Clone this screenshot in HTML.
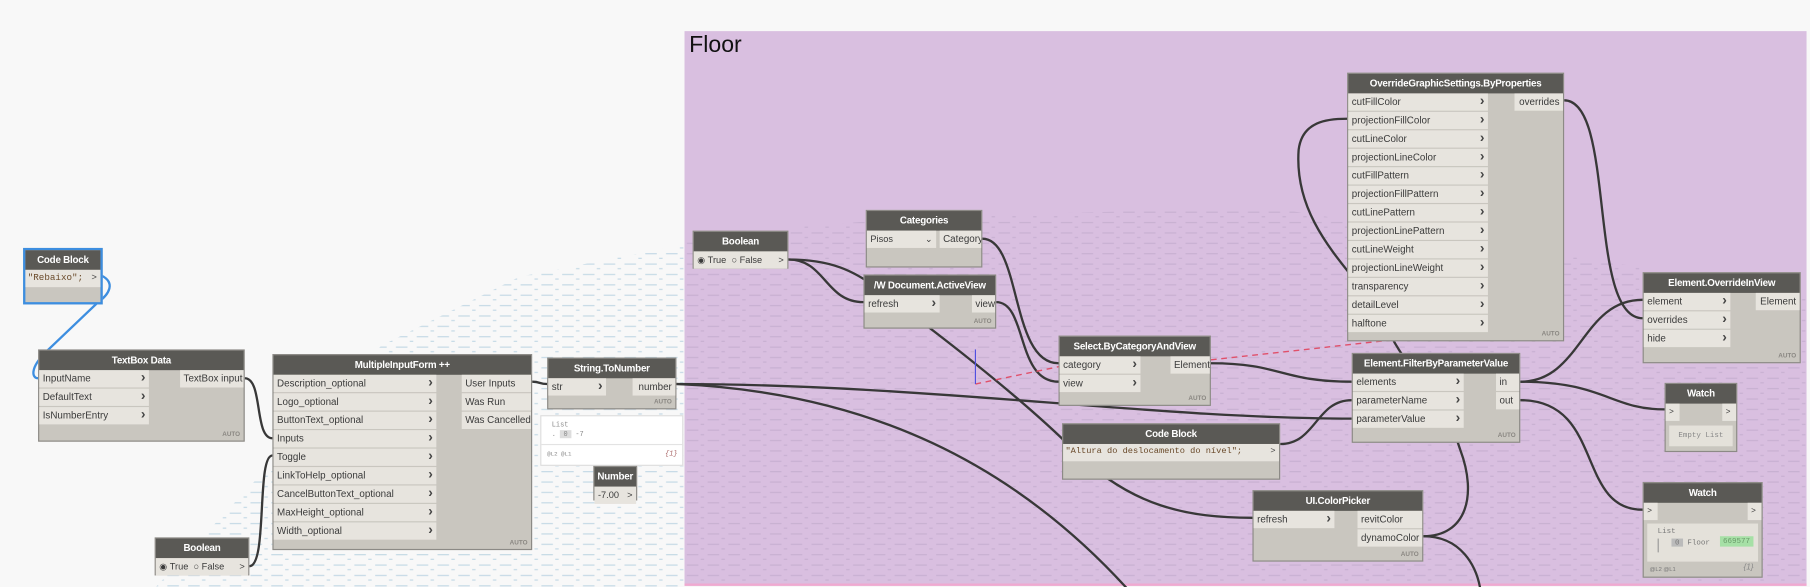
<!DOCTYPE html>
<html><head><meta charset="utf-8">
<style>
html,body{margin:0;padding:0;width:1810px;height:587px;overflow:hidden;background:#f8f8f8}
#w{position:absolute;left:0;top:0;width:1568px;height:509px;transform:scale(1.15434,1.1532);transform-origin:0 0;font-family:"Liberation Sans",sans-serif}
.grp{position:absolute;left:593px;top:27px;width:972px;height:479px;background:#d9bfe0;border-bottom:2px solid #f0a9d0}
.grp .t{position:absolute;left:4px;top:1px;font-size:20px;color:#111}
.n{position:absolute;background:#c9c6bf;border:1px solid #8c8a86;font-size:8.5px;color:#3a3a3a;box-sizing:border-box}
.h{background:#5a5955;color:#fff;font-weight:bold;text-align:center;height:17px;line-height:17px;font-size:8.5px;white-space:nowrap;overflow:hidden;letter-spacing:-0.2px}
.b{display:flex;justify-content:space-between}
.c{display:flex;flex-direction:column}
.r{height:15px;line-height:15px;background:#e7e4de;margin-bottom:1px;padding:0 3px;white-space:nowrap;position:relative;overflow:hidden}
.c.i .r::after{content:"›";position:absolute;right:3px;top:-1px;font-weight:bold;font-size:12px;color:#444}
.c.o .r{text-align:right}
.a{position:absolute;right:3px;bottom:2px;font-size:5.5px;font-weight:bold;color:#8a8782}
.m{font-family:"Liberation Mono",monospace;color:#6a4a2a}
svg{position:absolute;left:0;top:0}
</style></head><body><div id="w">
<div class="grp"><div class="t">Floor</div></div>
<svg width="1568" height="509">
<defs>
<pattern id="pb" width="18" height="9" patternUnits="userSpaceOnUse"><path d="M1 4h10M13 8h3" stroke="#a9c9dc" stroke-width="1"/></pattern>
<pattern id="pp" width="18" height="9" patternUnits="userSpaceOnUse"><path d="M1 4h10M13 8h3" stroke="#b7a2c4" stroke-width="1"/></pattern>
</defs>
<polygon points="135,509 330,300 450,240 593,212 593,509" fill="url(#pb)" opacity="0.7"/>
<polygon points="593,205 800,188 1100,180 1565,255 1565,505 593,505" fill="url(#pp)" opacity="0.55"/>
<g fill="none" stroke="#383838" stroke-width="2">
<path d="M683,225 C720,225 740,235 760,250 C800,280 880,340 930,390 C980,440 1030,449 1085,449"/>
<path d="M586,333 C750,340 880,400 985,520"/>
<path d="M1233,465 C1270,465 1280,430 1265,390 C1250,340 1215,320 1200,280 C1180,240 1120,200 1125,130 C1128,105 1150,103 1167,103"/>
<path d="M1233,465 C1265,465 1280,490 1283,515"/>
<path d="M212,328 C228,328 220,380 236,380"/>
<path d="M216,491 C232,491 222,395 236,395"/>
<path d="M461,331 C468,331 467,333 474,333"/>
<path d="M586,333 C800,333 1000,363 1171,363"/>
<path d="M683,225 C715,225 715,262 748,262"/>
<path d="M851,207 C885,207 875,315 917,315"/>
<path d="M863,262 C890,262 880,331 917,331"/>
<path d="M1049,315 C1110,315 1110,331 1171,331"/>
<path d="M1109,385 C1140,385 1140,347 1171,347"/>
<path d="M1317,331 C1370,331 1370,260 1423,260"/>
<path d="M1317,331 C1390,331 1395,355 1442,355"/>
<path d="M1317,347 C1390,347 1365,442 1423,442"/>
<path d="M1355,87 C1400,87 1375,276 1423,276"/>
</g>
<path d="M88,239 C100,245 95,255 85,262 L40,305 C25,320 28,328 33,328" fill="none" stroke="#3d8ee0" stroke-width="2"/>
<path d="M845,333 L917,318 M1049,312 L1250,290" stroke="#e0506a" stroke-width="1.2" stroke-dasharray="5,4" fill="none"/>
<path d="M845,303 V333" stroke="#5050e0" stroke-width="1"/>
</svg>

<div class="n" style="left:20px;top:215px;width:69px;height:49px;border:2px solid #3d8ee0">
<div class="h">Code Block</div>
<div class="r m" style="font-size:8px;padding-left:2px">"Rebaixo";<span style="position:absolute;right:3px;color:#444">&gt;</span></div></div>

<div class="n" style="left:33px;top:303px;width:179px;height:80px"><div class="h">TextBox Data</div>
<div class="b"><div class="c i" style="width:95px"><div class="r">InputName</div><div class="r">DefaultText</div><div class="r">IsNumberEntry</div></div>
<div class="c o" style="width:55px"><div class="r">TextBox input</div></div></div><div class="a">AUTO</div></div>

<div class="n" style="left:236px;top:307px;width:225px;height:170px"><div class="h">MultipleInputForm ++</div>
<div class="b"><div class="c i" style="width:141px"><div class="r">Description_optional</div><div class="r">Logo_optional</div><div class="r">ButtonText_optional</div><div class="r">Inputs</div><div class="r">Toggle</div><div class="r">LinkToHelp_optional</div><div class="r">CancelButtonText_optional</div><div class="r">MaxHeight_optional</div><div class="r">Width_optional</div></div>
<div class="c o" style="width:60px"><div class="r" style="text-align:left">User Inputs</div><div class="r" style="text-align:left">Was Run</div><div class="r" style="text-align:left">Was Cancelled</div></div></div><div class="a">AUTO</div></div>

<div class="n" style="left:474px;top:310px;width:112px;height:45px"><div class="h">String.ToNumber</div>
<div class="b"><div class="c i" style="width:50px"><div class="r">str</div></div><div class="c o" style="width:37px"><div class="r">number</div></div></div><div class="a">AUTO</div></div>

<div style="position:absolute;left:468px;top:360px;width:122px;height:42px;background:#fff;border:1px solid #ddd;font-family:'Liberation Mono',monospace;font-size:6px;color:#888">
<div style="position:absolute;left:9px;top:4px">List</div>
<div style="position:absolute;left:9px;top:12px">. <span style="background:#ddd;padding:0 3px">0</span> -7</div>
<div style="position:absolute;left:0;right:0;top:24px;border-top:1px solid #e3e3e3"></div>
<div style="position:absolute;left:5px;top:30px;font-size:5px">@L2 @L1</div>
<div style="position:absolute;right:4px;top:29px;font-style:italic;color:#a66">{1}</div></div>

<div class="n" style="left:514px;top:404px;width:38px;height:30px"><div class="h">Number</div>
<div class="r" style="font-size:8px">-7.00<span style="position:absolute;right:3px">&gt;</span></div></div>

<div class="n" style="left:134px;top:466px;width:82px;height:33px"><div class="h">Boolean</div>
<div class="r" style="font-size:8px">◉ True&nbsp; ○ False<span style="position:absolute;right:3px">&gt;</span></div></div>

<div class="n" style="left:600px;top:200px;width:83px;height:33px"><div class="h">Boolean</div>
<div class="r" style="font-size:8px">◉ True&nbsp; ○ False<span style="position:absolute;right:3px">&gt;</span></div></div>

<div class="n" style="left:750px;top:182px;width:101px;height:50px"><div class="h">Categories</div>
<div class="b"><div class="r" style="width:54px;font-size:8px">Pisos<span style="position:absolute;right:3px">⌄</span></div><div class="r" style="width:30px">Category</div></div></div>

<div class="n" style="left:748px;top:238px;width:115px;height:47px"><div class="h">/W Document.ActiveView</div>
<div class="b"><div class="c i" style="width:65px"><div class="r">refresh</div></div><div class="c o" style="width:20px"><div class="r">view</div></div></div><div class="a">AUTO</div></div>

<div class="n" style="left:917px;top:291px;width:132px;height:61px"><div class="h">Select.ByCategoryAndView</div>
<div class="b"><div class="c i" style="width:70px"><div class="r">category</div><div class="r">view</div></div><div class="c o" style="width:34px"><div class="r">Element</div></div></div><div class="a">AUTO</div></div>

<div class="n" style="left:920px;top:367px;width:189px;height:49px"><div class="h">Code Block</div>
<div class="r m" style="font-size:7.5px;padding-left:2px">"Altura do deslocamento do nível";<span style="position:absolute;right:3px;color:#444">&gt;</span></div></div>

<div class="n" style="left:1171px;top:306px;width:146px;height:78px"><div class="h">Element.FilterByParameterValue</div>
<div class="b"><div class="c i" style="width:96px"><div class="r">elements</div><div class="r">parameterName</div><div class="r">parameterValue</div></div><div class="c o" style="width:20px"><div class="r" style="text-align:left">in</div><div class="r" style="text-align:left">out</div></div></div><div class="a">AUTO</div></div>

<div class="n" style="left:1167px;top:63px;width:188px;height:233px"><div class="h">OverrideGraphicSettings.ByProperties</div>
<div class="b"><div class="c i" style="width:121px"><div class="r">cutFillColor</div><div class="r">projectionFillColor</div><div class="r">cutLineColor</div><div class="r">projectionLineColor</div><div class="r">cutFillPattern</div><div class="r">projectionFillPattern</div><div class="r">cutLinePattern</div><div class="r">projectionLinePattern</div><div class="r">cutLineWeight</div><div class="r">projectionLineWeight</div><div class="r">transparency</div><div class="r">detailLevel</div><div class="r">halftone</div></div>
<div class="c o" style="width:42px"><div class="r">overrides</div></div></div><div class="a">AUTO</div></div>

<div class="n" style="left:1085px;top:425px;width:148px;height:62px"><div class="h">UI.ColorPicker</div>
<div class="b"><div class="c i" style="width:70px"><div class="r">refresh</div></div><div class="c o" style="width:56px"><div class="r" style="text-align:left">revitColor</div><div class="r" style="text-align:left">dynamoColor</div></div></div><div class="a">AUTO</div></div>

<div class="n" style="left:1423px;top:236px;width:137px;height:79px"><div class="h">Element.OverrideInView</div>
<div class="b"><div class="c i" style="width:75px"><div class="r">element</div><div class="r">overrides</div><div class="r">hide</div></div><div class="c o" style="width:38px"><div class="r">Element</div></div></div><div class="a">AUTO</div></div>

<div class="n" style="left:1442px;top:332px;width:63px;height:60px"><div class="h">Watch</div>
<div class="b"><div class="r" style="width:6px;font-size:7px">&gt;</div><div class="r" style="width:6px;font-size:7px">&gt;</div></div>
<div style="position:absolute;left:3px;right:3px;top:36px;height:18px;background:#e4e1da;text-align:center;line-height:18px;font-family:'Liberation Mono',monospace;font-size:6.5px;color:#888">Empty List</div></div>

<div class="n" style="left:1423px;top:418px;width:104px;height:83px"><div class="h">Watch</div>
<div class="b"><div class="r" style="width:6px;font-size:7px">&gt;</div><div class="r" style="width:6px;font-size:7px">&gt;</div></div>
<div style="position:absolute;left:3px;right:3px;top:35px;height:33px;background:#e4e1da;font-family:'Liberation Mono',monospace;font-size:6.5px;color:#777">
<div style="position:absolute;left:9px;top:3px">List</div>
<div style="position:absolute;left:9px;top:13px;width:1px;height:12px;background:#999"></div>
<div style="position:absolute;left:21px;top:13px"><span style="background:#bbb;padding:0 3px;color:#777">0</span> Floor</div>
<div style="position:absolute;right:4px;top:11px;background:#a6e0a6;padding:1px 3px;color:#6a9a6a">669577</div></div>
<div style="position:absolute;left:5px;top:72px;font-size:5px;color:#777">@L2 @L1</div>
<div style="position:absolute;right:7px;top:70px;font-size:7px;font-style:italic;color:#888">{1}</div></div>
</div></body></html>
